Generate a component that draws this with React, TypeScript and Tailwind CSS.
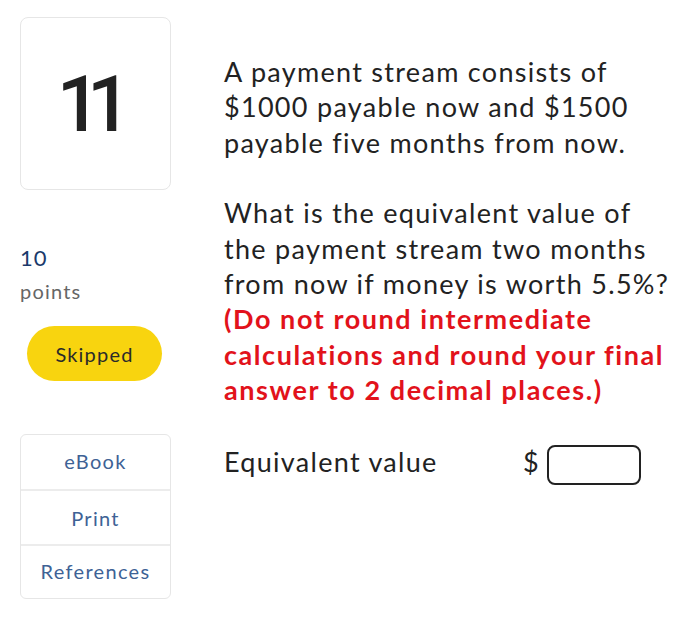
import React from "react";

export default function App() {
  return (
    <div className="w-[700px] h-[622px] bg-white flex" style={{ fontFamily: "Lato, 'Open Sans', sans-serif" }}>
      <div className="w-[224px] shrink-0 pl-[20px] pt-[17px] flex flex-col">
        <div className="w-[151px] h-[173px] border border-[#e6e6e6] rounded-[8px] flex items-center justify-center">
          <span
            className="text-[78px] leading-none text-[#222] font-medium tracking-[-14px] mr-[17px] mt-[2px]"
            style={{ fontFamily: "Roboto, sans-serif" }}
          >
            11
          </span>
        </div>
        <div className="mt-[55px] text-[22px] leading-[26px] text-[#1b3a6b] tracking-[0.04em]">10</div>
        <div className="mt-[7px] text-[20px] leading-[26px] text-[#666] tracking-[0.06em]">points</div>
        <div className="mt-[22px] ml-[7px] w-[135px] h-[55px] rounded-full bg-[#f8d40f] flex items-center justify-center text-[20px] text-[#2a2a2a] tracking-[0.06em]">
          Skipped
        </div>
        <div className="mt-[53px] w-[151px] border border-[#e6e6e6] rounded-[6px] flex flex-col text-[20px] text-[#3e6295] tracking-[0.065em]">
          <div className="h-[56px] flex items-center justify-center border-b-2 border-[#ececec] pb-[2px]">eBook</div>
          <div className="h-[55px] flex items-center justify-center border-b-2 border-[#ececec]">Print</div>
          <div className="h-[52px] flex items-center justify-center pb-[2px]">References</div>
        </div>
      </div>
      <div className="flex-1 pt-[54px] text-[27px] leading-[35.4px] text-[#222] tracking-[0.048em]">
        <p>
          A payment stream consists of
          <br />$1000 payable now and $1500
          <br />payable five months from now.
        </p>
        <p className="mt-[35px]">
          What is the equivalent value of
          <br />the payment stream two months
          <br />from now if money is worth 5.5%?
          <br />
          <span className="font-bold text-[#e2121b] tracking-[0.058em]">
            (Do not round intermediate
            <br />calculations and round your final
            <br />answer to 2 decimal places.)
          </span>
        </p>
        <div className="mt-[32px] flex items-center">
          <span className="w-[299px]">Equivalent value</span>
          <span className="mr-[7px]">$</span>
          <div className="w-[94px] h-[40px] border-2 border-[#222] rounded-[8px] mt-[5px]" />
        </div>
      </div>
    </div>
  );
}
